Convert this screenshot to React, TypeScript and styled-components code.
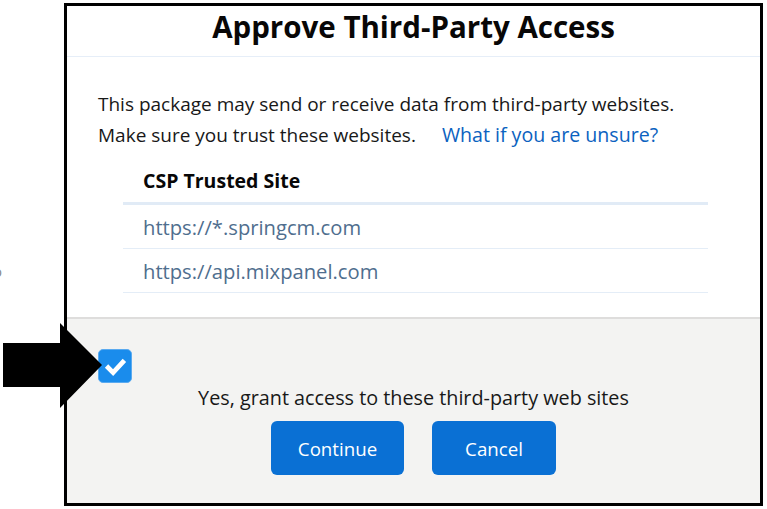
import styled, { createGlobalStyle } from 'styled-components'

const GlobalStyle = createGlobalStyle`
	html, body {
		margin: 0;
		padding: 0;
		background: #fff;
	}
	body {
		font-family: "Open Sans", Lato, "Liberation Sans", sans-serif;
		color: #181818;
	}
`

const Page = styled.div`
	position: relative;
	width: 767px;
	height: 509px;
	overflow: hidden;
`

const Frame = styled.div`
	box-sizing: border-box;
	margin: 3px 0 0 64px;
	width: 699px;
	height: 503px;
	border: 3px solid #000;
	display: flex;
	flex-direction: column;
	background: #fff;
`

const Header = styled.div`
	height: 50px;
	border-bottom: 1px solid #e6eef8;
	display: flex;
	justify-content: center;
`

const Title = styled.h1`
	margin: 0;
	font-size: 29.5px;
	line-height: 34px;
	font-weight: 700;
	color: #080707;
	padding-top: 4px;
`

const Body = styled.div`
	padding: 32px 52px 24px 31px;
`

const Intro = styled.p`
	margin: 0;
	height: 62px;
	font-size: 19px;
	line-height: 31px;
	color: #181818;
`

const HelpLink = styled.a`
	color: #0b62c0;
	text-decoration: none;
	margin-left: 26px;
	font-size: 19.6px;
	line-height: 20px;
`

const Table = styled.div`
	margin: 7px 0 0 25px;
`

const HeadCell = styled.div`
	height: 44px;
	display: flex;
	align-items: center;
	padding-left: 20px;
	font-size: 19.5px;
	font-weight: 700;
	color: #080707;
	border-bottom: 3px solid #e1ebf6;
`

const Row = styled.div`
	height: 43px;
	display: flex;
	align-items: center;
	padding-left: 20px;
	font-size: 20.2px;
	color: #4f6e8e;
	border-bottom: 1px solid #e4edf7;
`

const Footer = styled.div`
	flex: 1;
	background: #f3f3f2;
	border-top: 2px solid #dedddc;
	padding: 30px 0 0 31px;
	display: flex;
	flex-direction: column;
`

const Checkbox = styled.div`
	box-sizing: border-box;
	width: 34px;
	height: 34px;
	border-radius: 5px;
	background: #1a8cec;
	border: 1px solid #5aaaf0;
	display: flex;
	align-items: center;
	justify-content: center;
`

const Consent = styled.div`
	margin: 3px 31px 0 0;
	text-align: center;
	font-size: 19.8px;
	line-height: 24px;
	color: #181818;
`

const Actions = styled.div`
	margin: 11px 31px 0 0;
	display: flex;
	justify-content: center;
	gap: 28px;
`

const Button = styled.button<{ $w: number }>`
	width: ${p => p.$w}px;
	height: 54px;
	border: none;
	border-radius: 6px;
	background: #0a70d4;
	color: #fff;
	font-family: inherit;
	font-size: 18.7px;
	cursor: pointer;
`

const Arrow = styled.svg`
	position: absolute;
	left: 3px;
	top: 323px;
`

const Stray = styled.span`
	position: absolute;
	left: -7px;
	top: 261px;
	font-size: 15px;
	color: #8a8a8a;
`

const sites = ['https://*.springcm.com', 'https://api.mixpanel.com']

const App = () => {
	return (
		<Page>
			<GlobalStyle />
			<Frame>
				<Header>
					<Title>Approve Third-Party Access</Title>
				</Header>
				<Body>
					<Intro>
						This package may send or receive data from third-party websites.
						<br />
						Make sure you trust these websites.
						<HelpLink href="#">What if you are unsure?</HelpLink>
					</Intro>
					<Table>
						<HeadCell>CSP Trusted Site</HeadCell>
						{sites.map(s => (
							<Row key={s}>{s}</Row>
						))}
					</Table>
				</Body>
				<Footer>
					<Checkbox>
						<svg width="34" height="34" viewBox="0 0 34 34">
							<polyline points="8,17 15,24 27,11" fill="none" stroke="#fff" strokeWidth="5" />
						</svg>
					</Checkbox>
					<Consent>Yes, grant access to these third-party web sites</Consent>
					<Actions>
						<Button $w={133}>Continue</Button>
						<Button $w={124}>Cancel</Button>
					</Actions>
				</Footer>
			</Frame>
			<Arrow width="100" height="86" viewBox="0 0 100 86">
				<polygon points="0,20 57,20 57,0 99,42 57,85 57,64 0,64" fill="#000" />
			</Arrow>
			<Stray>o</Stray>
		</Page>
	)
}

export default App
